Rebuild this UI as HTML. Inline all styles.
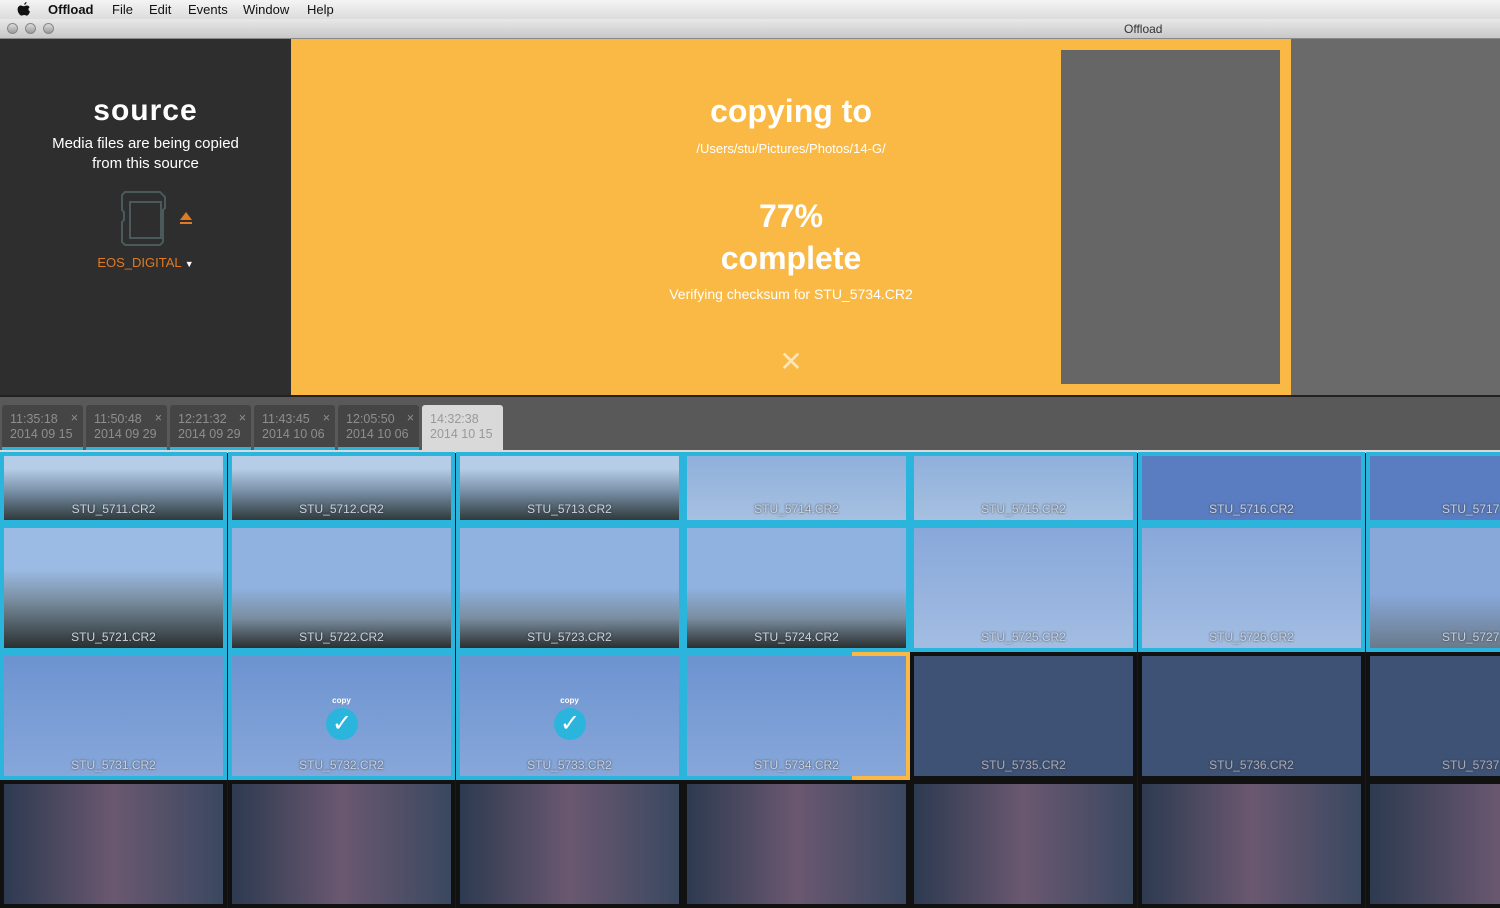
<!DOCTYPE html>
<html><head><style>
*{margin:0;padding:0;box-sizing:border-box}
body{width:1500px;height:853px;overflow:hidden;background:#1a1a1a;font-family:"Liberation Sans",sans-serif;position:relative}
.abs{position:absolute}
.menu{left:0;top:0;width:1500px;height:19px;background:linear-gradient(#f4f4f4,#dcdcdc);font-size:13px;color:#111}
.menu span{position:absolute;top:2px}
.title{left:0;top:19px;width:1500px;height:20px;background:linear-gradient(#e8e8e8,#c8c8c8);border-bottom:1px solid #888;font-size:12px;color:#333}
.dot{width:11px;height:11px;border-radius:50%;background:linear-gradient(#ddd,#999);border:1px solid #888;top:4px}
.tab{top:405px;width:81px;height:46px;background:#454545;border-radius:3px 3px 0 0;color:#8e8e8e;font-size:12.5px;line-height:15px;padding:7px 0 0 8px;border-bottom:4px solid #2cb5dc}
.tab b{position:absolute;right:5px;top:6px;font-weight:normal}
.cell{width:227px;height:128px;border:4px solid #2cb5dc;overflow:hidden}
.cell .n{position:absolute;left:0;right:0;bottom:4px;text-align:center;font-size:12px;color:#c8d2e0;text-shadow:0 0 2px #333}
</style></head><body>
<div class="abs menu"><svg class="abs" style="left:17px;top:2px" width="14" height="15" viewBox="0 0 14 15"><path d="M9.5 0C9.6 1.3 8.6 2.7 7.3 2.8 7.1 1.5 8.2 0.2 9.5 0ZM12.6 5.2C11.1 6 11 8.6 13 9.5 12.4 11.3 11.2 13.6 9.8 13.6 8.7 13.6 8.5 13 7.2 13 5.8 13 5.5 13.6 4.5 13.6 3 13.6 0.6 10.6 0.6 7.4 0.6 4.8 2.3 3.5 3.8 3.5 5 3.5 5.8 4.2 6.8 4.2 7.8 4.2 8.3 3.5 9.9 3.5 11 3.5 12 4 12.6 5.2Z" fill="#111"/></svg><span style="left:48px;font-weight:bold">Offload</span><span style="left:112px">File</span><span style="left:149px">Edit</span><span style="left:188px">Events</span><span style="left:243px">Window</span><span style="left:307px">Help</span></div>
<div class="abs title"><div class="abs dot" style="left:7px"></div><div class="abs dot" style="left:25px"></div><div class="abs dot" style="left:43px"></div><span class="abs" style="left:1124px;top:3px">Offload</span></div>
<div class="abs" style="left:0;top:39px;width:291px;height:356px;background:#2e2e2e;color:#fff;text-align:center">
<div style="margin-top:55px;font-size:30px;font-weight:bold;letter-spacing:1px">source</div>
<div style="font-size:15px;line-height:20px;margin-top:6px">Media files are being copied<br>from this source</div>
<svg class="abs" style="left:120px;top:151px" width="75" height="58"><path d="M5 2H40L45 7V18L43 20V52L40 55H5L2 52V32L4 30V22L2 20V5Z" fill="none" stroke="#4a5a5a" stroke-width="2"/><rect x="10" y="12" width="31" height="36" fill="none" stroke="#4a5a5a" stroke-width="2"/><path d="M66 22L72 30H60Z M60 32H72V34H60Z" fill="#e07a25"/></svg>
<div class="abs" style="left:0;width:291px;top:216px;font-size:13px;color:#e07a25">EOS_DIGITAL <span style="color:#fff;font-size:9px">▼</span></div>
</div>
<div class="abs" style="left:291px;top:39px;width:1000px;height:356px;background:#f9b944;color:#fff;text-align:center">
<div class="abs" style="left:0;width:1000px;top:54px;font-size:32px;font-weight:bold">copying to</div>
<div class="abs" style="left:0;width:1000px;top:102px;font-size:13px">/Users/stu/Pictures/Photos/14-G/</div>
<div class="abs" style="left:0;width:1000px;top:156px;font-size:32px;font-weight:bold;line-height:42px">77%<br>complete</div>
<div class="abs" style="left:0;width:1000px;top:247px;font-size:14px">Verifying checksum for STU_5734.CR2</div>
<div class="abs" style="left:0;width:1000px;top:306px;font-size:28px;font-weight:100;color:#fde5b8">✕</div>
<div class="abs" style="left:770px;top:11px;width:219px;height:334px;background:#666"></div>
</div>
<div class="abs" style="left:1291px;top:39px;width:209px;height:356px;background:#6a6a6a"></div>
<div class="abs" style="left:0;top:395px;width:1500px;height:57px;background:#595959;border-top:2px solid #222"></div>
<div class="abs tab" style="left:2px">11:35:18<br>2014 09 15<b>×</b></div>
<div class="abs tab" style="left:86px">11:50:48<br>2014 09 29<b>×</b></div>
<div class="abs tab" style="left:170px">12:21:32<br>2014 09 29<b>×</b></div>
<div class="abs tab" style="left:254px">11:43:45<br>2014 10 06<b>×</b></div>
<div class="abs tab" style="left:338px">12:05:50<br>2014 10 06<b>×</b></div>
<div class="abs tab" style="left:422px;background:#d9d9d9;border-bottom:none;color:#999">14:32:38<br>2014 10 15</div>
<div class="abs" style="left:0;top:450px;width:1500px;height:3px;background:#d9d9d9"></div>
<!-- row1 -->
<div class="abs cell" style="left:0;top:452px;height:72px;background:linear-gradient(#b5cde6 20%,#7890a8 55%,#2f3a3a)"><div class="n">STU_5711.CR2</div></div>
<div class="abs cell" style="left:228px;top:452px;height:72px;background:linear-gradient(#b5cde6 20%,#7890a8 55%,#2f3a3a)"><div class="n">STU_5712.CR2</div></div>
<div class="abs cell" style="left:456px;top:452px;height:72px;background:linear-gradient(#b5cde6 20%,#7890a8 55%,#2f3a3a)"><div class="n">STU_5713.CR2</div></div>
<div class="abs cell" style="left:683px;top:452px;height:72px;background:linear-gradient(#8fb0dc,#a6c0e0)"><div class="n">STU_5714.CR2</div></div>
<div class="abs cell" style="left:910px;top:452px;height:72px;background:linear-gradient(#8fb0dc,#a6c0e0)"><div class="n">STU_5715.CR2</div></div>
<div class="abs cell" style="left:1138px;top:452px;height:72px;background:#5a7cc0"><div class="n">STU_5716.CR2</div></div>
<div class="abs cell" style="left:1366px;top:452px;height:72px;background:#5a7cc0;width:140px"><div class="n" style="text-align:left;left:72px">STU_5717.C</div></div>
<!-- row2 -->
<div class="abs cell" style="left:0;top:524px;background:linear-gradient(#9bbbe4 35%,#7a8ea0 60%,#2a3030)"><div class="n">STU_5721.CR2</div></div>
<div class="abs cell" style="left:228px;top:524px;background:linear-gradient(#90b2e0 50%,#7a8ea0 75%,#2a3030)"><div class="n">STU_5722.CR2</div></div>
<div class="abs cell" style="left:456px;top:524px;background:linear-gradient(#90b2e0 50%,#7a8ea0 75%,#2a3030)"><div class="n">STU_5723.CR2</div></div>
<div class="abs cell" style="left:683px;top:524px;background:linear-gradient(#90b2e0 50%,#7a8ea0 75%,#2a3030)"><div class="n">STU_5724.CR2</div></div>
<div class="abs cell" style="left:910px;top:524px;background:linear-gradient(#88a8da,#a3bde2)"><div class="n">STU_5725.CR2</div></div>
<div class="abs cell" style="left:1138px;top:524px;background:linear-gradient(#88a8da,#a3bde2)"><div class="n">STU_5726.CR2</div></div>
<div class="abs cell" style="left:1366px;top:524px;width:140px;background:linear-gradient(#88a8da 55%,#6a7a8a)"><div class="n" style="text-align:left;left:72px">STU_5727.C</div></div>
<!-- row3 -->
<div class="abs cell" style="left:0;top:652px;background:linear-gradient(#6d93d0,#87a7da)"><div class="n">STU_5731.CR2</div></div>
<div class="abs cell" style="left:228px;top:652px;background:linear-gradient(#6d93d0,#87a7da)"><div class="abs" style="left:0;right:0;top:40px;text-align:center;color:#fff;font-size:8px;font-weight:bold">copy</div><div class="abs" style="left:94px;top:52px;width:32px;height:32px;border-radius:50%;background:#2cb5dc;color:#fff;text-align:center;font-size:24px;line-height:32px">✓</div><div class="n">STU_5732.CR2</div></div>
<div class="abs cell" style="left:456px;top:652px;background:linear-gradient(#6d93d0,#87a7da)"><div class="abs" style="left:0;right:0;top:40px;text-align:center;color:#fff;font-size:8px;font-weight:bold">copy</div><div class="abs" style="left:94px;top:52px;width:32px;height:32px;border-radius:50%;background:#2cb5dc;color:#fff;text-align:center;font-size:24px;line-height:32px">✓</div><div class="n">STU_5733.CR2</div></div>
<div class="abs cell" style="left:683px;top:652px;background:linear-gradient(#6d93d0,#87a7da);border-color:#2cb5dc #f9b944 #2cb5dc #2cb5dc"><div class="n">STU_5734.CR2</div></div>
<div class="abs" style="left:852px;top:652px;width:58px;height:4px;background:#f9b944"></div>
<div class="abs" style="left:852px;top:776px;width:58px;height:4px;background:#f9b944"></div>
<div class="abs cell" style="left:910px;top:652px;border-color:#111;background:#3d5275"><div class="n" style="color:#aab">STU_5735.CR2</div></div>
<div class="abs cell" style="left:1138px;top:652px;border-color:#111;background:#3d5275"><div class="n" style="color:#aab">STU_5736.CR2</div></div>
<div class="abs cell" style="left:1366px;top:652px;width:140px;border-color:#111;background:#3d5275"><div class="n" style="text-align:left;left:72px;color:#aab">STU_5737.C</div></div>
<!-- row4 -->
<div class="abs cell" style="left:0;top:780px;border-color:#111;background:linear-gradient(90deg,#2d3a50,#6a5870 50%,#3a4860)"></div>
<div class="abs cell" style="left:228px;top:780px;border-color:#111;background:linear-gradient(90deg,#2d3a50,#6a5870 50%,#3a4860)"></div>
<div class="abs cell" style="left:456px;top:780px;border-color:#111;background:linear-gradient(90deg,#2d3a50,#6a5870 50%,#3a4860)"></div>
<div class="abs cell" style="left:683px;top:780px;border-color:#111;background:linear-gradient(90deg,#2d3a50,#6a5870 50%,#3a4860)"></div>
<div class="abs cell" style="left:910px;top:780px;border-color:#111;background:linear-gradient(90deg,#2d3a50,#6a5870 50%,#3a4860)"></div>
<div class="abs cell" style="left:1138px;top:780px;border-color:#111;background:linear-gradient(90deg,#2d3a50,#6a5870 50%,#3a4860)"></div>
<div class="abs cell" style="left:1366px;top:780px;width:140px;border-color:#111;background:linear-gradient(90deg,#2d3a50,#6a5870)"></div>
</body></html>
